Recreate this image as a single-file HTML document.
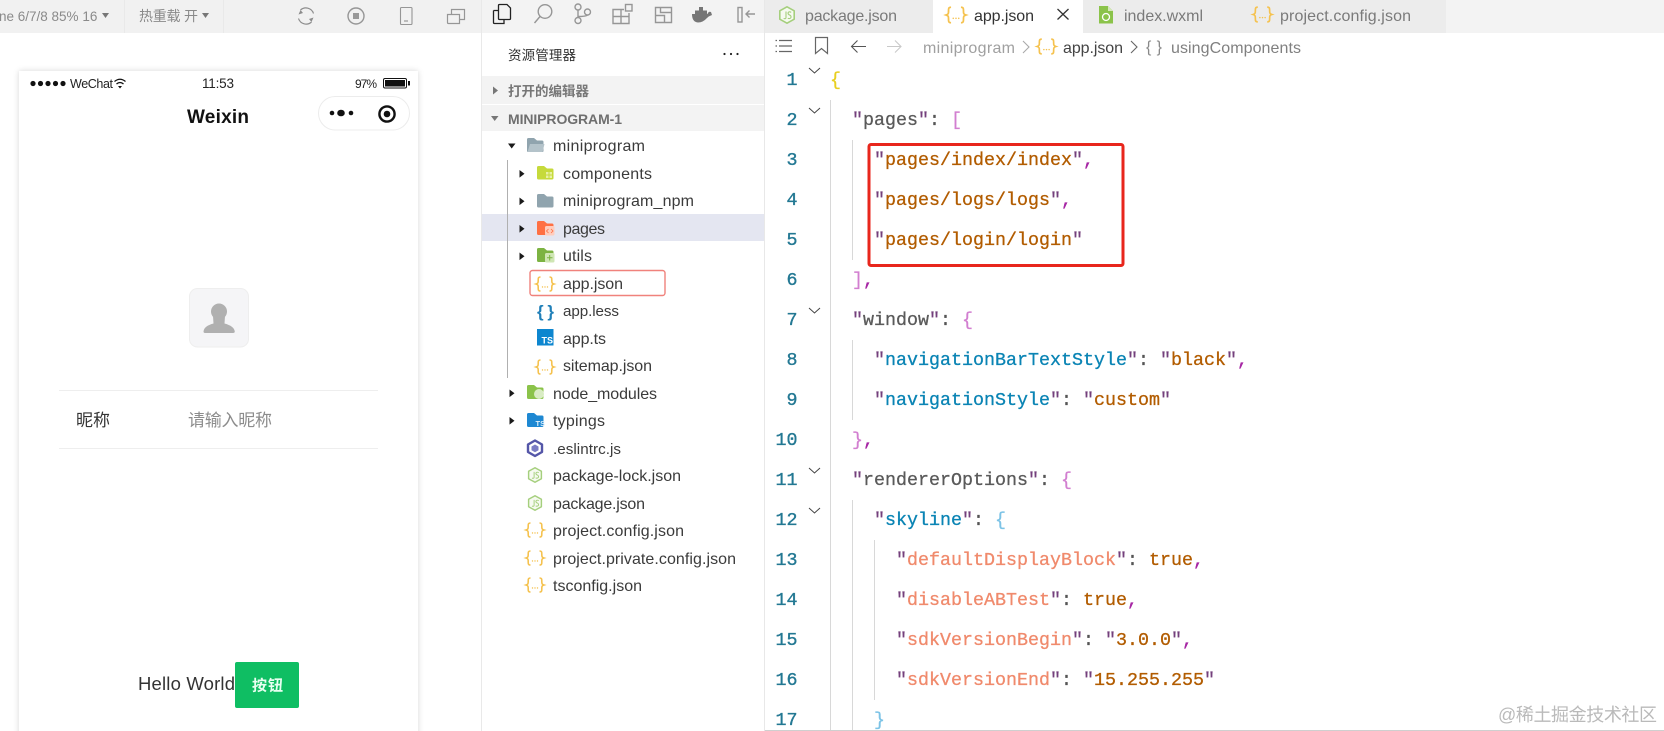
<!DOCTYPE html>
<html lang="zh">
<head>
<meta charset="utf-8">
<title>app.json</title>
<style>
html,body{margin:0;padding:0;background:#fff;width:1664px;height:731px;overflow:hidden}
svg{display:block;position:absolute;left:0;top:0}
text{font-family:"Liberation Sans","Noto Sans CJK SC",sans-serif;white-space:pre}
.t{font-size:16px;fill:#3b3b3b}
.c{font-family:"Liberation Mono","DejaVu Sans Mono",monospace;font-size:18.33px;stroke-width:.3px}
.n{font-family:"Liberation Mono","DejaVu Sans Mono",monospace;font-size:18.33px;fill:#237893;stroke:#237893;stroke-width:.35px;text-anchor:end}
.tab{font-size:16px;fill:#7a7a7a}
.q{fill:#74407c;stroke:#74407c}.k{fill:#5a5a5a;stroke:#5a5a5a}.p{fill:#a626a4;stroke:#a626a4}.o{fill:#555;stroke:#555}.s{fill:#b25c00;stroke:#b25c00}.b{fill:#0a84b4;stroke:#0a84b4}.f{fill:#f08a6c;stroke:#f08a6c}
.ye{fill:#e8cf20;stroke:#e8cf20}.pk{fill:#d27fd0;stroke:#d27fd0}.lb{fill:#7cc3e6;stroke:#7cc3e6}
.ic{fill:none;stroke:#969696;stroke-width:1.4}
</style>
</head>
<body>
<svg width="1664" height="731" viewBox="0 0 1664 731" xmlns="http://www.w3.org/2000/svg">
<defs>
<symbol id="jb" viewBox="0 0 20 18" overflow="visible">
<path d="M5.5 2C3 2 3.2 3.5 3.2 5.5S3.2 8.3 1 9C3.2 9.7 3.2 10.5 3.2 12.5S3 16 5.5 16M14.5 2C17 2 16.8 3.5 16.8 5.5S16.8 8.3 19 9C16.8 9.7 16.8 10.5 16.8 12.5S17 16 14.5 16" fill="none" stroke="#f5c24f" stroke-width="1.6"/>
<circle cx="7.5" cy="12" r=".7" fill="#f5c24f"/><circle cx="10" cy="12" r=".7" fill="#f5c24f"/><circle cx="12.5" cy="12" r=".7" fill="#f5c24f"/>
</symbol>
<symbol id="js" viewBox="0 0 18 18" overflow="visible">
<path d="M9 .8L16.2 4.8V13.2L9 17.2L1.8 13.2V4.8Z" fill="#f6faf0" stroke="#a5cf7d" stroke-width="1.6" stroke-linejoin="round"/>
<path d="M8 5.5V11.5Q8 13.2 5.6 12.5M13.2 6.4Q10.8 5 10 7Q10 8.4 11.6 9Q13.6 10 12.8 11.8Q11.6 13.2 9.8 12.2" fill="none" stroke="#a5cf7d" stroke-width="1.1"/>
</symbol>
</defs>

<!-- simulator toolbar -->
<rect x="0" y="0" width="481" height="33" fill="#f1f1f1"/>
<rect x="124" y="0" width="1" height="33" fill="#e9e9e9"/>
<rect x="223" y="0" width="1" height="33" fill="#e9e9e9"/>
<text x="-1" y="21" font-size="13.5" fill="#8a8a8a">ne 6/7/8 85% 16</text>
<path d="M102 13h7l-3.5 5z" fill="#777"/>
<text x="139" y="21" font-size="14" fill="#8a8a8a" textLength="59" lengthAdjust="spacing">热重载 开</text>
<path d="M202 13h7l-3.5 5z" fill="#777"/>
<path d="M300.5 10A8 8 0 0 1 313.5 13.5M311.5 22A8 8 0 0 1 298.5 18.5" fill="none" stroke="#8c8c8c" stroke-width="1.2"/>
<path d="M298.5 14.500l2-4.500 2.500 3zM313.500 17.500l-2 4.500-2.500-3z" fill="#8c8c8c"/>
<circle cx="356" cy="16" r="8" class="ic"/><rect x="353" y="13" width="6" height="6" fill="#999"/>
<rect x="400.5" y="7.5" width="11.5" height="17" rx="1" fill="none" stroke="#969696" stroke-width="1.1"/><path d="M404 21h4" stroke="#888"/>
<path d="M447.5 14.500H459.5V23.500H448.500Q447.500 23.500 447.500 22.500ZM451.500 14.500V9.500H464.500V19.500H459.500" fill="none" stroke="#969696" stroke-width="1.2"/>

<!-- phone -->
<rect x="19" y="71" width="399" height="670" fill="#fff" style="filter:drop-shadow(0 0 3px rgba(0,0,0,.16))"/>
<g fill="#111"><circle cx="33" cy="83.5" r="2.6"/><circle cx="40.5" cy="83.5" r="2.6"/><circle cx="48" cy="83.5" r="2.6"/><circle cx="55.5" cy="83.5" r="2.6"/><circle cx="63" cy="83.5" r="2.6"/></g>
<text x="70" y="88" font-size="12.5" fill="#222" textLength="43" lengthAdjust="spacing">WeChat</text>
<path d="M114.5 81.500Q120 77 125.500 81.500M116.500 84Q120 81 123.500 84" fill="none" stroke="#111" stroke-width="1.3"/><path d="M118 86h4l-2 2.500z" fill="#111"/>
<text x="202" y="88" font-size="13.5" fill="#222" textLength="32" lengthAdjust="spacing">11:53</text>
<text x="355" y="88" font-size="12" fill="#222" textLength="22" lengthAdjust="spacing">97%</text>
<rect x="383.5" y="78.5" width="23" height="9.5" rx="1.5" fill="#fff" stroke="#111"/><rect x="385" y="80" width="20" height="6.5" fill="#111"/><rect x="408" y="81" width="2" height="4.5" fill="#111"/>
<text x="187" y="123" font-size="19" font-weight="700" fill="#111" textLength="62" lengthAdjust="spacing">Weixin</text>
<rect x="318.5" y="96.5" width="91" height="33.5" rx="16.7" fill="#fff" stroke="#ececec"/>
<circle cx="332" cy="113" r="2.3" fill="#111"/><ellipse cx="341" cy="113" rx="3.8" ry="3.3" fill="#111"/><circle cx="351" cy="113" r="2.3" fill="#111"/>
<circle cx="387" cy="114" r="7.6" fill="none" stroke="#111" stroke-width="2.4"/><circle cx="387" cy="114" r="3.3" fill="#111"/>

<rect x="189.5" y="288.5" width="59" height="58.5" rx="8" fill="#f5f5f7" stroke="#eee"/>
<circle cx="219" cy="311.500" r="8" fill="#b0b0b0"/>
<path d="M213 316L213.500 323.500Q204 326 203.500 331.500Q203.500 333 205 333H233Q234.800 333 234.800 331.500Q234 326 224.500 323.500L225 316Z" fill="#b0b0b0"/>
<rect x="59" y="390" width="319" height="1" fill="#eee"/>
<rect x="59" y="448" width="319" height="1" fill="#eee"/>
<text x="76" y="426" font-size="17" fill="#333" textLength="34" lengthAdjust="spacing">昵称</text>
<text x="188" y="426" font-size="17" fill="#8c8c8c" textLength="84" lengthAdjust="spacing">请输入昵称</text>
<text x="138" y="690" font-size="18.5" fill="#333" textLength="97" lengthAdjust="spacing">Hello World</text>
<rect x="235" y="662" width="64" height="46" rx="2" fill="#0fbe63"/>
<text x="252" y="690.5" font-size="15" font-weight="700" fill="#e8fff1" textLength="31" lengthAdjust="spacing">按钮</text>

<!-- sidebar -->
<rect x="481" y="0" width="1" height="731" fill="#e9e9e9"/>
<rect x="482" y="0" width="283" height="33" fill="#f3f3f3"/>
<!-- activity icons -->
<path d="M493.5 10.500V22.500Q493.500 23.500 494.500 23.500H504V19.500M498.500 9.500V18.500Q498.500 19.500 499.500 19.500H509.500Q510.500 19.500 510.500 18.500V8L507 4.500H499.500Q498.500 4.500 498.500 5.500V10.500H493.500" fill="none" stroke="#222" stroke-width="1.3"/>
<circle cx="545" cy="11.500" r="6.800" class="ic"/><path d="M540 16.500L534.500 23" class="ic"/>
<circle cx="578" cy="7" r="3" class="ic"/><circle cx="578" cy="20.500" r="3" class="ic"/><circle cx="587.500" cy="12" r="3" class="ic"/><path d="M578 10V17.500M578 16.500Q586 16.500 587.500 15" class="ic"/>
<path d="M624 9.500H613V23.500H629V13M621 9.500V23.500M613 16.500H629" class="ic"/><rect x="625.500" y="4.500" width="6.500" height="6.500" class="ic" stroke-width="1.100"/>
<path d="M655.500 7.500H671.500V22.500H655.500ZM660.500 7.500V12.500H671.500M655.500 15.500H664.500V22.500" class="ic" stroke-width="1.500"/>
<path d="M692 14H707.500Q708.500 11 711 12L712 15Q709 16 707 18Q703 22.500 698 22.500Q692 22 692 14Z" fill="#767676"/><rect x="695" y="10.500" width="12" height="3.500" fill="#767676"/><rect x="699" y="7" width="4" height="3.500" fill="#767676"/>
<rect x="738" y="7.500" width="4" height="14.500" class="ic" stroke-width="1.100"/><path d="M755 14H746M749.500 10.500L746 14L749.500 17.500" class="ic" stroke-width="1"/>

<text x="508" y="60" font-size="13.5" fill="#333" textLength="68" lengthAdjust="spacing">资源管理器</text>
<circle cx="724.5" cy="54" r="1.1" fill="#222"/><circle cx="731" cy="54" r="1.1" fill="#222"/><circle cx="737.5" cy="54" r="1.1" fill="#222"/>
<rect x="482" y="76" width="283" height="28" fill="#f3f3f3"/>
<rect x="482" y="105" width="283" height="26" fill="#f3f3f3"/>
<path d="M493 86.5L498 90.5L493 94.5Z" fill="#777"/>
<text x="508" y="96" font-size="13.5" font-weight="700" fill="#777" textLength="81" lengthAdjust="spacing">打开的编辑器</text>
<path d="M491 116H498.5L494.7 121Z" fill="#777"/>
<text x="508" y="124" font-size="14" font-weight="700" fill="#6f6f6f" textLength="114" lengthAdjust="spacing">MINIPROGRAM-1</text>

<rect x="482" y="214" width="283" height="27" fill="#e4e6f1"/>
<rect x="507" y="160" width="1" height="218" fill="#b0b0b0"/>
<rect x="530" y="270.5" width="135" height="25" rx="2.5" fill="#fff" stroke="#f0827c" stroke-width="1.4"/>

<!-- tree arrows -->
<path d="M508 143.5H515.5L511.7 148.5Z" fill="#1a1a1a"/>
<g fill="#1a1a1a">
<path d="M519.5 170L524.5 173.8L519.5 177.6Z"/>
<path d="M519.5 197.5L524.5 201.3L519.5 205.1Z"/>
<path d="M519.5 225L524.5 228.8L519.5 232.6Z"/>
<path d="M519.5 252.5L524.5 256.3L519.5 260.1Z"/>
<path d="M509.5 389.5L514.5 393.3L509.5 397.1Z"/>
<path d="M509.5 417L514.5 420.8L509.5 424.6Z"/>
</g>

<!-- folders -->
<path d="M527 139.500Q527 138 528.500 138H534L537 140.500H542Q543.500 140.500 543.500 142V151Q543.500 152 542 152H528.500Q527 152 527 151Z" fill="#90a4ae"/>
<path d="M530 144H544.500L542.500 152H527.500Z" fill="#b4c3ca"/>
<path d="M537 167.500Q537 166 538.500 166H544L547 168.500H552Q553.500 168.500 553.500 170V178Q553.500 179.500 552 179.500H538.500Q537 179.500 537 178Z" fill="#c6da3b"/><path d="M546 172h6v6h-6z" fill="#e8f0a6"/><path d="M549 172v6M546 175h6" stroke="#c6da3b"/>
<path d="M537 195.500Q537 194 538.500 194H544L547 196.500H552Q553.500 196.500 553.500 198V206Q553.500 207.500 552 207.500H538.500Q537 207.500 537 206Z" fill="#90a4ae"/>
<path d="M537 222.500Q537 221 538.500 221H544L547 223.500H552Q553.500 223.500 553.500 225V233.500Q553.500 235 552 235H538.500Q537 235 537 233.500Z" fill="#ff7043"/><rect x="545" y="226" width="9.500" height="9.500" rx="1.500" fill="#ffcdbd"/><path d="M548.500 229L546.500 231L548.500 233M551 229L553 231L551 233" fill="none" stroke="#ff7043" stroke-width=".8"/>
<path d="M537 249.500Q537 248 538.500 248H544L547 250.500H552Q553.500 250.500 553.500 252V260.500Q553.500 262 552 262H538.500Q537 262 537 260.500Z" fill="#7cb342"/><rect x="545" y="253" width="9.500" height="9.500" rx="1.500" fill="#cfe6b4"/><path d="M549.700 255V260.500M547 257.700H552.500" stroke="#7cb342"/>
<path d="M527 386.500Q527 385 528.500 385H534L537 387.500H542Q543.500 387.500 543.500 389V397.500Q543.500 399 542 399H528.500Q527 399 527 397.500Z" fill="#8bc34a"/><circle cx="539" cy="394" r="5" fill="#d9ecc4"/>
<path d="M527 414.500Q527 413 528.500 413H534L537 415.500H542Q543.500 415.500 543.500 417V425.500Q543.500 427 542 427H528.500Q527 427 527 425.500Z" fill="#1e88d2"/>
<text x="535.500" y="426" font-size="7.500" font-weight="700" fill="#dff0fb">TS</text>

<!-- file icons -->
<use href="#jb" x="535" y="275" width="20" height="18"/>
<text x="537" y="317" font-size="17" font-weight="700" fill="#1f7fb8" textLength="17" lengthAdjust="spacing">{ }</text>
<rect x="537" y="329" width="16.5" height="16.5" fill="#0d86cf"/>
<text x="541.5" y="343.500" font-size="9" font-weight="700" fill="#fff">TS</text>
<use href="#jb" x="535" y="358" width="20" height="18"/>
<path d="M535 440.500L542 444.500V452L535 456L528 452V444.500Z" fill="#fff" stroke="#5456a8" stroke-width="2.400" stroke-linejoin="round"/><path d="M535 444.500L538.500 446.500V450.300L535 452.300L531.500 450.300V446.500Z" fill="#7a7cc4"/>
<use href="#js" x="527" y="467" width="16" height="16"/>
<use href="#js" x="527" y="495" width="16" height="16"/>
<use href="#jb" x="525" y="521" width="20" height="18"/>
<use href="#jb" x="525" y="549" width="20" height="18"/>
<use href="#jb" x="525" y="576" width="20" height="18"/>

<!-- tree labels -->
<text class="t" x="553" y="151" textLength="92" lengthAdjust="spacing">miniprogram</text>
<text class="t" x="563" y="179" textLength="89" lengthAdjust="spacing">components</text>
<text class="t" x="563" y="206" textLength="131" lengthAdjust="spacing">miniprogram_npm</text>
<text class="t" x="563" y="234" textLength="42" lengthAdjust="spacing">pages</text>
<text class="t" x="563" y="261" textLength="29" lengthAdjust="spacing">utils</text>
<text class="t" x="563" y="289" textLength="60" lengthAdjust="spacing">app.json</text>
<text class="t" x="563" y="316" style="font-size:15.2px" textLength="56" lengthAdjust="spacing">app.less</text>
<text class="t" x="563" y="344" textLength="43" lengthAdjust="spacing">app.ts</text>
<text class="t" x="563" y="371" textLength="89" lengthAdjust="spacing">sitemap.json</text>
<text class="t" x="553" y="399" textLength="104" lengthAdjust="spacing">node_modules</text>
<text class="t" x="553" y="426" textLength="52" lengthAdjust="spacing">typings</text>
<text class="t" x="553" y="454" style="font-size:15.2px" textLength="68" lengthAdjust="spacing">.eslintrc.js</text>
<text class="t" x="553" y="481" textLength="128" lengthAdjust="spacing">package-lock.json</text>
<text class="t" x="553" y="509" textLength="92" lengthAdjust="spacing">package.json</text>
<text class="t" x="553" y="536" textLength="131" lengthAdjust="spacing">project.config.json</text>
<text class="t" x="553" y="564" textLength="183" lengthAdjust="spacing">project.private.config.json</text>
<text class="t" x="553" y="591" textLength="89" lengthAdjust="spacing">tsconfig.json</text>

<rect x="764" y="0" width="1" height="731" fill="#e8e8e8"/>

<!-- tabs -->
<rect x="765" y="0" width="899" height="33" fill="#f3f3f3"/>
<rect x="765" y="0" width="168" height="33" fill="#ececec"/>
<rect x="933" y="0" width="150" height="33" fill="#fff"/>
<rect x="1083" y="0" width="153" height="33" fill="#ececec"/>
<rect x="1236" y="0" width="210" height="33" fill="#ececec"/>
<use href="#js" x="778" y="6" width="18" height="18"/>
<text class="tab" x="805" y="21" textLength="92" lengthAdjust="spacing">package.json</text>
<use href="#jb" x="945" y="5" width="22" height="20"/>
<text class="tab" x="974" y="21" textLength="60" lengthAdjust="spacing" style="fill:#333">app.json</text>
<path d="M1057.5 9L1068.5 19.5M1068.5 9L1057.5 19.5" stroke="#333" stroke-width="1.3"/>
<path d="M1099 6H1108L1113 11V23.5H1099Z" fill="#8bc34a"/><path d="M1108 6V11H1113" fill="#d4e8b8"/><circle cx="1106" cy="17" r="3.5" fill="none" stroke="#fff" stroke-width="1.3"/>
<text class="tab" x="1124" y="21" textLength="79" lengthAdjust="spacing">index.wxml</text>
<use href="#jb" x="1252" y="5" width="21" height="19"/>
<text class="tab" x="1280" y="21" textLength="131" lengthAdjust="spacing">project.config.json</text>

<!-- breadcrumb -->
<path d="M779 40.5H792M779 46H792M779 51.5H792" stroke="#666" stroke-width="1.2"/>
<path d="M775.5 40.5h1.5M775.5 46h1.5M775.5 51.5h1.5" stroke="#666" stroke-width="1.2"/>
<path d="M815.5 37.5H827.5V53.5L821.5 48.5L815.5 53.5Z" fill="none" stroke="#666" stroke-width="1.2"/>
<path d="M866 46.5H851.5M857.5 40.5L851.5 46.5L857.5 52.5" fill="none" stroke="#555" stroke-width="1.1"/>
<path d="M887 46.5H901M895 40.5L901 46.5L895 52.5" fill="none" stroke="#c9c9c9" stroke-width="1.1"/>
<text x="923" y="53" font-size="16" fill="#a0a0a0" textLength="92" lengthAdjust="spacing">miniprogram</text>
<path d="M1023 41L1029 47L1023 53" fill="none" stroke="#aaa" stroke-width="1.1"/>
<use href="#jb" x="1036" y="37" width="21" height="19"/>
<text x="1063" y="53" font-size="16" fill="#444" textLength="60" lengthAdjust="spacing">app.json</text>
<path d="M1131 41L1137 47L1131 53" fill="none" stroke="#666" stroke-width="1.1"/>
<text x="1146" y="52" font-size="16" fill="#888" textLength="16" lengthAdjust="spacing">{ }</text>
<text x="1171" y="53" font-size="16" fill="#808080" textLength="130" lengthAdjust="spacing">usingComponents</text>

<!-- guides -->
<rect x="830" y="100" width="1" height="631" fill="#d8d8d8"/>
<rect x="852" y="140" width="1" height="120" fill="#d8d8d8"/>
<rect x="852" y="340" width="1" height="80" fill="#d8d8d8"/>
<rect x="852" y="500" width="1" height="231" fill="#d8d8d8"/>
<rect x="874" y="540" width="1" height="160" fill="#d8d8d8"/>

<!-- fold chevrons -->
<g fill="none" stroke="#444" stroke-width="1">
<path d="M809 68L814.5 73L820 68"/>
<path d="M809 108L814.5 113L820 108"/>
<path d="M809 308L814.5 313L820 308"/>
<path d="M809 468L814.5 473L820 468"/>
<path d="M809 508L814.5 513L820 508"/>
</g>

<g transform="translate(0,-1)">
<!-- line numbers -->
<text class="n" x="797.5" y="86">1</text>
<text class="n" x="797.5" y="126">2</text>
<text class="n" x="797.5" y="166">3</text>
<text class="n" x="797.5" y="206">4</text>
<text class="n" x="797.5" y="246">5</text>
<text class="n" x="797.5" y="286">6</text>
<text class="n" x="797.5" y="326">7</text>
<text class="n" x="797.5" y="366">8</text>
<text class="n" x="797.5" y="406">9</text>
<text class="n" x="797.5" y="446">10</text>
<text class="n" x="797.5" y="486">11</text>
<text class="n" x="797.5" y="526">12</text>
<text class="n" x="797.5" y="566">13</text>
<text class="n" x="797.5" y="606">14</text>
<text class="n" x="797.5" y="646">15</text>
<text class="n" x="797.5" y="686">16</text>
<text class="n" x="797.5" y="726">17</text>

<!-- code -->
<text class="c ye" x="830" y="86">{</text>
<text class="c" x="852" y="126"><tspan class="q">"</tspan><tspan class="k">pages</tspan><tspan class="q">"</tspan><tspan class="o">: </tspan><tspan class="pk">[</tspan></text>
<text class="c" x="874" y="166"><tspan class="q">"</tspan><tspan class="s">pages/index/index</tspan><tspan class="q">"</tspan><tspan class="p">,</tspan></text>
<text class="c" x="874" y="206"><tspan class="q">"</tspan><tspan class="s">pages/logs/logs</tspan><tspan class="q">"</tspan><tspan class="p">,</tspan></text>
<text class="c" x="874" y="246"><tspan class="q">"</tspan><tspan class="s">pages/login/login</tspan><tspan class="q">"</tspan></text>
<text class="c" x="852" y="286"><tspan class="pk">]</tspan><tspan class="p">,</tspan></text>
<text class="c" x="852" y="326"><tspan class="q">"</tspan><tspan class="k">window</tspan><tspan class="q">"</tspan><tspan class="o">: </tspan><tspan class="pk">{</tspan></text>
<text class="c" x="874" y="366"><tspan class="q">"</tspan><tspan class="b">navigationBarTextStyle</tspan><tspan class="q">"</tspan><tspan class="o">: </tspan><tspan class="q">"</tspan><tspan class="s">black</tspan><tspan class="q">"</tspan><tspan class="p">,</tspan></text>
<text class="c" x="874" y="406"><tspan class="q">"</tspan><tspan class="b">navigationStyle</tspan><tspan class="q">"</tspan><tspan class="o">: </tspan><tspan class="q">"</tspan><tspan class="s">custom</tspan><tspan class="q">"</tspan></text>
<text class="c" x="852" y="446"><tspan class="pk">}</tspan><tspan class="p">,</tspan></text>
<text class="c" x="852" y="486"><tspan class="q">"</tspan><tspan class="k">rendererOptions</tspan><tspan class="q">"</tspan><tspan class="o">: </tspan><tspan class="pk">{</tspan></text>
<text class="c" x="874" y="526"><tspan class="q">"</tspan><tspan class="b">skyline</tspan><tspan class="q">"</tspan><tspan class="o">: </tspan><tspan class="lb">{</tspan></text>
<text class="c" x="896" y="566"><tspan class="q">"</tspan><tspan class="f">defaultDisplayBlock</tspan><tspan class="q">"</tspan><tspan class="o">: </tspan><tspan class="s">true</tspan><tspan class="p">,</tspan></text>
<text class="c" x="896" y="606"><tspan class="q">"</tspan><tspan class="f">disableABTest</tspan><tspan class="q">"</tspan><tspan class="o">: </tspan><tspan class="s">true</tspan><tspan class="p">,</tspan></text>
<text class="c" x="896" y="646"><tspan class="q">"</tspan><tspan class="f">sdkVersionBegin</tspan><tspan class="q">"</tspan><tspan class="o">: </tspan><tspan class="q">"</tspan><tspan class="s">3.0.0</tspan><tspan class="q">"</tspan><tspan class="p">,</tspan></text>
<text class="c" x="896" y="686"><tspan class="q">"</tspan><tspan class="f">sdkVersionEnd</tspan><tspan class="q">"</tspan><tspan class="o">: </tspan><tspan class="q">"</tspan><tspan class="s">15.255.255</tspan><tspan class="q">"</tspan></text>
<text class="c lb" x="874" y="726">}</text>
</g>

<!-- red annotation -->
<rect x="869" y="144.5" width="254" height="121" rx="2" fill="none" stroke="#e8261c" stroke-width="3"/>

<!-- footer line and watermark -->
<rect x="765" y="730" width="899" height="1" fill="#cfcfcf"/>
<text x="1498" y="721" font-size="18" fill="#bababa" textLength="159" lengthAdjust="spacing">@稀土掘金技术社区</text>
</svg>
</body>
</html>
